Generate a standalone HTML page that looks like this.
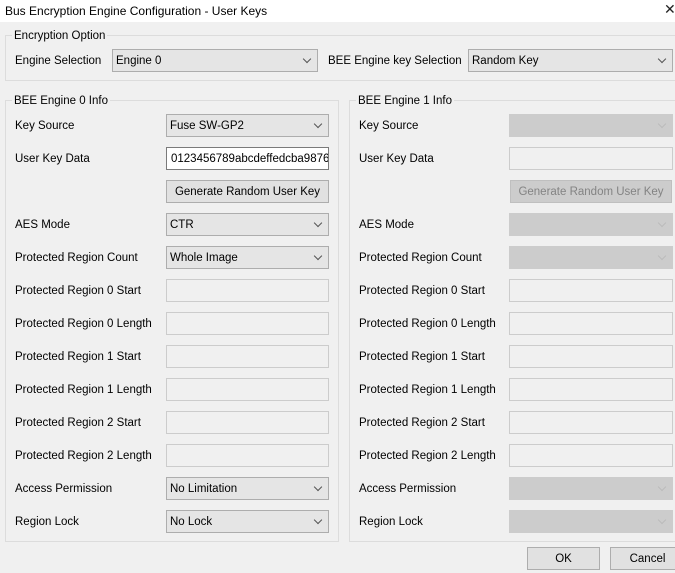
<!DOCTYPE html>
<html><head><style>
*{margin:0;padding:0;box-sizing:border-box}
body{width:675px;height:573px;background:#f0f0f0;font-family:"Liberation Sans",sans-serif;font-size:11.5px;color:#000;position:relative;overflow:hidden}
.a{position:absolute;white-space:nowrap}
.title{left:0;top:0;width:675px;height:22px;background:#fff}
.grp{position:absolute;border:1px solid #dcdcdc}
.gl{position:absolute;background:#f0f0f0;padding:0 2px;line-height:14px;margin-top:1px}
.lbl{position:absolute;line-height:14px;margin-top:1px}
.cb{position:absolute;height:23px;background:#e5e5e5;border:1px solid #adadad;padding-left:3px;line-height:23px}
.cb:after{content:"";position:absolute;right:7px;top:6px;width:5px;height:5px;border-right:1px solid #555;border-bottom:1px solid #555;transform:rotate(45deg)}
.cb.d{background:#cccccc;border-color:#cccccc}
.cb.d:after{border-color:#bbb}
.tb{position:absolute;height:23px;background:#f0f0f0;border:1px solid #ccc}
.btn{position:absolute;height:23px;background:#e1e1e1;border:1px solid #adadad;text-align:center;line-height:22px}
.btn.d{background:#cccccc;border-color:#bfbfbf;color:#838383}
</style></head><body>
<div class="a title"></div>
<div class="lbl" style="left:5px;top:3px;font-size:12px">Bus Encryption Engine Configuration - User Keys</div>
<div class="lbl" style="left:664px;top:1px;font-size:14px;font-weight:300;color:#222">✕</div>

<div class="grp" style="left:5px;top:35px;width:680px;height:46px"></div>
<div class="gl" style="left:12px;top:28px">Encryption Option</div>
<div class="lbl" style="left:15px;top:53px">Engine Selection</div>
<div class="cb" style="left:112px;top:49px;width:206px">Engine 0</div>
<div class="lbl" style="left:328px;top:53px">BEE Engine key Selection</div>
<div class="cb" style="left:468px;top:49px;width:205px">Random Key</div>

<div class="grp" style="left:5px;top:100px;width:334px;height:442px"></div>
<div class="gl" style="left:12px;top:93px">BEE Engine 0 Info</div>
<div class="grp" style="left:349px;top:100px;width:340px;height:442px"></div>
<div class="gl" style="left:356px;top:93px">BEE Engine 1 Info</div>

<div class="lbl" style="left:15px;top:118px">Key Source</div>
<div class="cb" style="left:166px;top:114px;width:163px">Fuse SW-GP2</div>
<div class="lbl" style="left:15px;top:151px">User Key Data</div>
<div class="tb" style="left:166px;top:147px;width:163px;background:#fff;border-color:#7a7a7a;padding-left:4px;line-height:22px;overflow:hidden;white-space:nowrap">0123456789abcdeffedcba9876</div>
<div class="btn" style="left:166px;top:180px;width:163px">Generate Random User Key</div>
<div class="lbl" style="left:15px;top:217px">AES Mode</div>
<div class="cb" style="left:166px;top:213px;width:163px">CTR</div>
<div class="lbl" style="left:15px;top:250px">Protected Region Count</div>
<div class="cb" style="left:166px;top:246px;width:163px">Whole Image</div>
<div class="lbl" style="left:15px;top:283px">Protected Region 0 Start</div>
<div class="tb" style="left:166px;top:279px;width:163px"></div>
<div class="lbl" style="left:15px;top:316px">Protected Region 0 Length</div>
<div class="tb" style="left:166px;top:312px;width:163px"></div>
<div class="lbl" style="left:15px;top:349px">Protected Region 1 Start</div>
<div class="tb" style="left:166px;top:345px;width:163px"></div>
<div class="lbl" style="left:15px;top:382px">Protected Region 1 Length</div>
<div class="tb" style="left:166px;top:378px;width:163px"></div>
<div class="lbl" style="left:15px;top:415px">Protected Region 2 Start</div>
<div class="tb" style="left:166px;top:411px;width:163px"></div>
<div class="lbl" style="left:15px;top:448px">Protected Region 2 Length</div>
<div class="tb" style="left:166px;top:444px;width:163px"></div>
<div class="lbl" style="left:15px;top:481px">Access Permission</div>
<div class="cb" style="left:166px;top:477px;width:163px">No Limitation</div>
<div class="lbl" style="left:15px;top:514px">Region Lock</div>
<div class="cb" style="left:166px;top:510px;width:163px">No Lock</div>

<div class="lbl" style="left:359px;top:118px">Key Source</div>
<div class="cb d" style="left:509px;top:114px;width:164px"></div>
<div class="lbl" style="left:359px;top:151px">User Key Data</div>
<div class="tb" style="left:509px;top:147px;width:164px"></div>
<div class="btn d" style="left:510px;top:180px;width:162px">Generate Random User Key</div>
<div class="lbl" style="left:359px;top:217px">AES Mode</div>
<div class="cb d" style="left:509px;top:213px;width:164px"></div>
<div class="lbl" style="left:359px;top:250px">Protected Region Count</div>
<div class="cb d" style="left:509px;top:246px;width:164px"></div>
<div class="lbl" style="left:359px;top:283px">Protected Region 0 Start</div>
<div class="tb" style="left:509px;top:279px;width:164px"></div>
<div class="lbl" style="left:359px;top:316px">Protected Region 0 Length</div>
<div class="tb" style="left:509px;top:312px;width:164px"></div>
<div class="lbl" style="left:359px;top:349px">Protected Region 1 Start</div>
<div class="tb" style="left:509px;top:345px;width:164px"></div>
<div class="lbl" style="left:359px;top:382px">Protected Region 1 Length</div>
<div class="tb" style="left:509px;top:378px;width:164px"></div>
<div class="lbl" style="left:359px;top:415px">Protected Region 2 Start</div>
<div class="tb" style="left:509px;top:411px;width:164px"></div>
<div class="lbl" style="left:359px;top:448px">Protected Region 2 Length</div>
<div class="tb" style="left:509px;top:444px;width:164px"></div>
<div class="lbl" style="left:359px;top:481px">Access Permission</div>
<div class="cb d" style="left:509px;top:477px;width:164px"></div>
<div class="lbl" style="left:359px;top:514px">Region Lock</div>
<div class="cb d" style="left:509px;top:510px;width:164px"></div>

<div class="btn" style="left:527px;top:547px;width:73px">OK</div>
<div class="btn" style="left:610px;top:547px;width:75px">Cancel</div>
</body></html>
